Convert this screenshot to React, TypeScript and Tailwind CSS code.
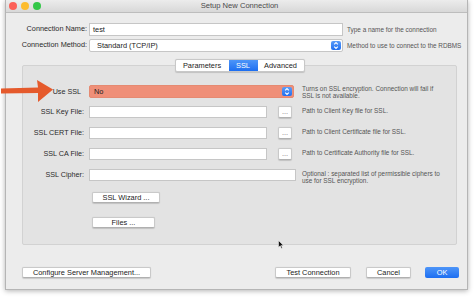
import React from 'react';

const font = { fontFamily: '"Liberation Sans", Arial, sans-serif' };

// --- small helpers ---
function Stepper() {
  return (
    <div className="flex h-full w-[10px] shrink-0 flex-col items-center justify-center rounded-[2px] bg-gradient-to-b from-[#5a9cf8] to-[#1f6ff0]">
      <svg width="6" height="9" viewBox="0 0 6 9" fill="none" stroke="white" strokeWidth="1.1">
        <path d="M1.2 3.4 L3 1.6 L4.8 3.4" />
        <path d="M1.2 5.6 L3 7.4 L4.8 5.6" />
      </svg>
    </div>
  );
}

function MacButton({ label, className = '' }: { label: string; className?: string }) {
  return (
    <div
      className={`flex h-[11px] items-center justify-center rounded-[2px] border border-[#c9c9c9] border-b-[#b0b0b0] bg-white text-[7.4px] leading-none text-[#222] shadow-[0_0.5px_1px_rgba(0,0,0,0.15)] ${className}`}
    >
      {label}
    </div>
  );
}

function FileRow({ label, help }: { label: string; help: string }) {
  return (
    <div className="flex h-[21px] items-start">
      <div className="h-[12px] w-[61px] text-right text-[7.2px] leading-[12px] text-[#2a2a2a]">{label}</div>
      <div className="ml-[5px] flex w-[207px] items-start">
        <div className="h-[12px] w-[178px] border border-[#c6c6c6] bg-white" />
        <MacButton label="..." className="ml-[11px] !h-[12px] w-[14px] text-[#777]" />
      </div>
      <div className="ml-[6px] pt-[1px] text-[6.4px] leading-[7px] text-[#555]">{help}</div>
    </div>
  );
}

export default function App() {
  return (
    <div className="relative h-[298px] w-[474px] overflow-hidden bg-white pl-[5px]" style={font}>
      <div className="h-[290px] w-[463px] border border-t-0 border-[#b5b5b5] bg-[#ececec] shadow-[0_1px_5px_rgba(0,0,0,0.3)]">
        {/* title bar */}
        <div className="relative flex h-[13px] items-center gap-[4px] border-b border-[#bdbdbd] bg-gradient-to-b from-[#ececec] to-[#d8d8d8] pl-[3px]">
          <div className="h-[8px] w-[8px] rounded-full bg-[#fc5f57]" />
          <div className="h-[8px] w-[8px] rounded-full bg-[#fdbc2e]" />
          <div className="h-[8px] w-[8px] rounded-full bg-[#33c748]" />
          <div className="absolute inset-0 flex items-center justify-center pl-[6px] text-[7.6px] text-[#4a4a4a]">
            Setup New Connection
          </div>
        </div>

        {/* connection name */}
        <div className="mt-[10px] flex h-[13px] items-center">
          <div className="w-[83px] pr-[2px] text-right text-[7.3px] text-[#2a2a2a]">Connection Name:</div>
          <div className="flex h-full w-[254px] items-center border border-[#c6c6c6] bg-white pl-[3px] text-[7.4px] text-[#222]">
            test
          </div>
          <div className="ml-[4px] text-[6.4px] text-[#555]">Type a name for the connection</div>
        </div>

        {/* connection method */}
        <div className="mt-[3px] flex h-[13px] items-center">
          <div className="w-[83px] pr-[2px] text-right text-[7.3px] text-[#2a2a2a]">Connection Method:</div>
          <div className="flex h-full w-[254px] items-center justify-between rounded-[2px] border border-[#c6c6c6] bg-white p-[1px] pl-[7px] text-[7.4px] text-[#222]">
            <span>Standard (TCP/IP)</span>
            <Stepper />
          </div>
          <div className="ml-[4px] text-[6.4px] text-[#555]">Method to use to connect to the RDBMS</div>
        </div>

        {/* tabs */}
        <div className="relative z-10 ml-[16px] mt-[7px] flex w-[435px] justify-center">
          <div className="flex h-[13px] overflow-hidden rounded-[2px] border border-[#c8c8c8] bg-white text-[7.4px] leading-none shadow-[0_0.5px_1px_rgba(0,0,0,0.15)]">
            <div className="flex w-[53px] items-center justify-center text-[#222]">Parameters</div>
            <div className="flex w-[29px] items-center justify-center bg-gradient-to-b from-[#4d95f8] to-[#1c6ef1] text-white">SSL</div>
            <div className="flex w-[46px] items-center justify-center text-[#222]">Advanced</div>
          </div>
        </div>

        {/* panel */}
        <div className="ml-[16px] mt-[-7px] h-[180px] w-[435px] rounded-[2px] border border-[#d2d2d2] bg-[#e3e3e3] pt-[19px]">
          {/* use ssl */}
          <div className="flex h-[21px] items-start">
            <div className="h-[13px] w-[61px] pr-[3px] text-right text-[7.2px] leading-[13px] text-[#2a2a2a]">Use SSL</div>
            <div className="ml-[5px] w-[207px]">
              <div className="flex h-[13px] w-[205px] items-center justify-between rounded-[2px] border border-[#e58a72] bg-[#ef8f78] p-[1px] pl-[4px] text-[7.4px] text-[#222]">
                <span>No</span>
                <Stepper />
              </div>
            </div>
            <div className="ml-[6px] text-[6.4px] leading-[7px] text-[#555]">
              Turns on SSL encryption. Connection will fail if
              <br />
              SSL is not available.
            </div>
          </div>

          <FileRow label="SSL Key File:" help="Path to Client Key file for SSL." />
          <FileRow label="SSL CERT File:" help="Path to Client Certificate file for SSL." />
          <FileRow label="SSL CA File:" help="Path to Certificate Authority file for SSL." />

          {/* cipher */}
          <div className="flex h-[12px] items-start">
            <div className="h-[12px] w-[61px] text-right text-[7.2px] leading-[12px] text-[#2a2a2a]">SSL Cipher:</div>
            <div className="ml-[5px] h-[12px] w-[207px] border border-[#c6c6c6] bg-white" />
            <div className="ml-[6px] pt-[1px] text-[6.4px] leading-[7px] text-[#555]">
              Optional : separated list of permissible ciphers to
              <br />
              use for SSL encryption.
            </div>
          </div>

          <MacButton label="SSL Wizard ..." className="ml-[69px] mt-[11px] w-[68px]" />
          <MacButton label="Files ..." className="ml-[69px] mt-[14px] w-[63px]" />
        </div>

        {/* bottom buttons */}
        <div className="ml-[16px] mt-[22px] flex w-[437px] items-center">
          <MacButton label="Configure Server Management..." className="w-[129px]" />
          <MacButton label="Test Connection" className="ml-auto w-[76px]" />
          <MacButton label="Cancel" className="ml-[15px] w-[45px]" />
          <div className="ml-[14px] flex h-[11px] w-[34px] items-center justify-center rounded-[2px] bg-gradient-to-b from-[#4d95f8] to-[#1c6ef1] text-[7.4px] leading-none text-white">
            OK
          </div>
        </div>
      </div>

      {/* annotation arrow */}
      <svg className="absolute left-[1px] top-[79px]" width="54" height="24" viewBox="0 0 54 24">
        <path d="M0 9.5 L37 8.5 L36 1 L52 10.5 L37 23 L37 14 L0 14.5 Z" fill="#e55a2c" />
      </svg>

      {/* mouse cursor */}
      <svg className="absolute left-[278px] top-[240px]" width="6" height="9" viewBox="0 0 6 9">
        <path d="M0.5 0.5 L0.5 7.5 L2.2 5.8 L3.4 8.5 L4.4 8 L3.3 5.4 L5.5 5.4 Z" fill="#111" stroke="white" strokeWidth="0.5" />
      </svg>
    </div>
  );
}
